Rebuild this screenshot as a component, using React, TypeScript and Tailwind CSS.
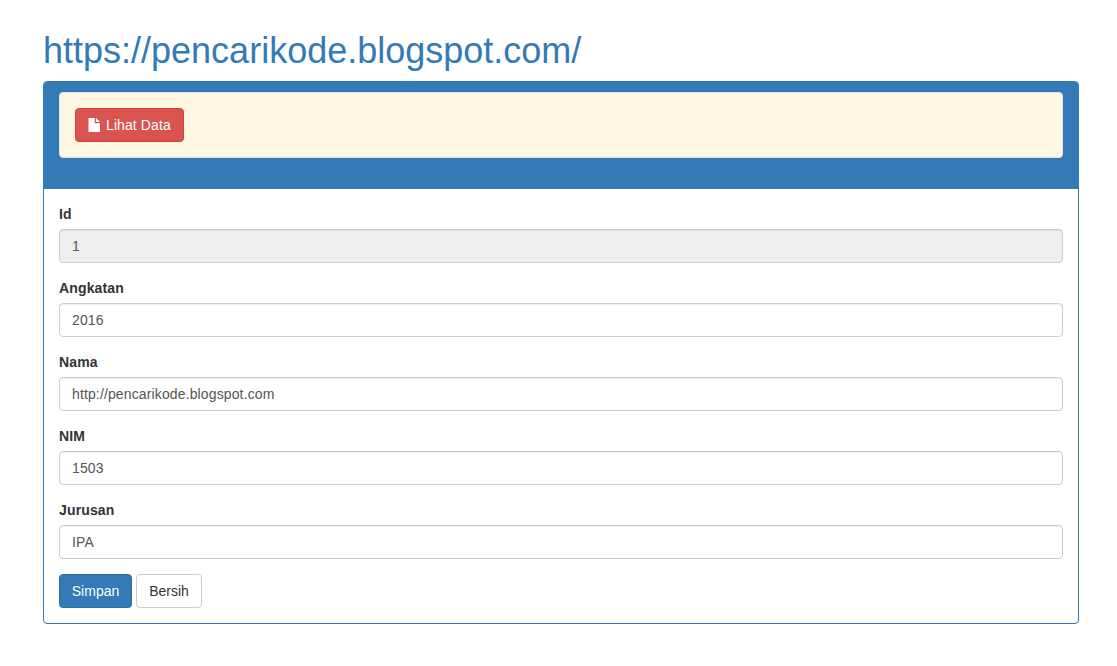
const fields = [
  { label: 'Id', value: '1', readOnly: true },
  { label: 'Angkatan', value: '2016' },
  { label: 'Nama', value: 'http://pencarikode.blogspot.com' },
  { label: 'NIM', value: '1503' },
  { label: 'Jurusan', value: 'IPA' },
];

function FileIcon() {
  return (
    <svg width="12" height="14" viewBox="0 0 12 14" className="shrink-0" fill="#fff">
      <path d="M0.5 0H6.8V5.2H12V14H0.5Z" />
      <path d="M8 0L12 4H8Z" />
    </svg>
  );
}

export default function App() {
  return (
    <div className="min-h-[666px] bg-white pt-[31px] pl-[43px] font-['Liberation_Sans',Arial,sans-serif] text-[14px] leading-[20px] text-[#333]">
      <h2 className="mb-[10px] h-[40px] text-[36px] font-normal leading-[40px] text-[#337ab7]">
        https://pencarikode.blogspot.com/
      </h2>

      <div className="w-[1036px] rounded-[4px] border border-[#337ab7] bg-white">
        <div className="rounded-t-[3px] bg-[#337ab7] px-[15px] pt-[10px] pb-[31px]">
          <div className="h-[66px] rounded-[4px] border border-[#e3e3e3] bg-[#fff7e3] p-[15px]">
            <button className="flex h-[34px] w-[109px] items-center gap-[6px] rounded-[4px] border border-[#d43f3a] bg-[#d9534f] px-[12px] tracking-[0.1px] text-white">
              <FileIcon />
              <span>Lihat Data</span>
            </button>
          </div>
        </div>

        <form className="flex flex-col gap-[15px] p-[15px]">
          {fields.map((field) => (
            <div key={field.label}>
              <label className="mb-[5px] block font-bold tracking-[0.15px]">{field.label}</label>
              <input
                readOnly
                defaultValue={field.value}
                className={`block h-[34px] w-full rounded-[4px] border border-[#ccc] px-[12px] py-[6px] tracking-[0.13px] text-[#555] shadow-[inset_0_1px_1px_rgba(0,0,0,0.075)] outline-none ${
                  field.readOnly ? 'bg-[#eee]' : 'bg-white'
                }`}
              />
            </div>
          ))}
          <div className="flex gap-[4px]">
            <button type="button" className="h-[34px] w-[73px] rounded-[4px] border border-[#2e6da4] bg-[#337ab7] text-white">
              Simpan
            </button>
            <button type="button" className="h-[34px] w-[66px] rounded-[4px] border border-[#ccc] bg-white text-[#333]">
              Bersih
            </button>
          </div>
        </form>
      </div>
    </div>
  );
}
